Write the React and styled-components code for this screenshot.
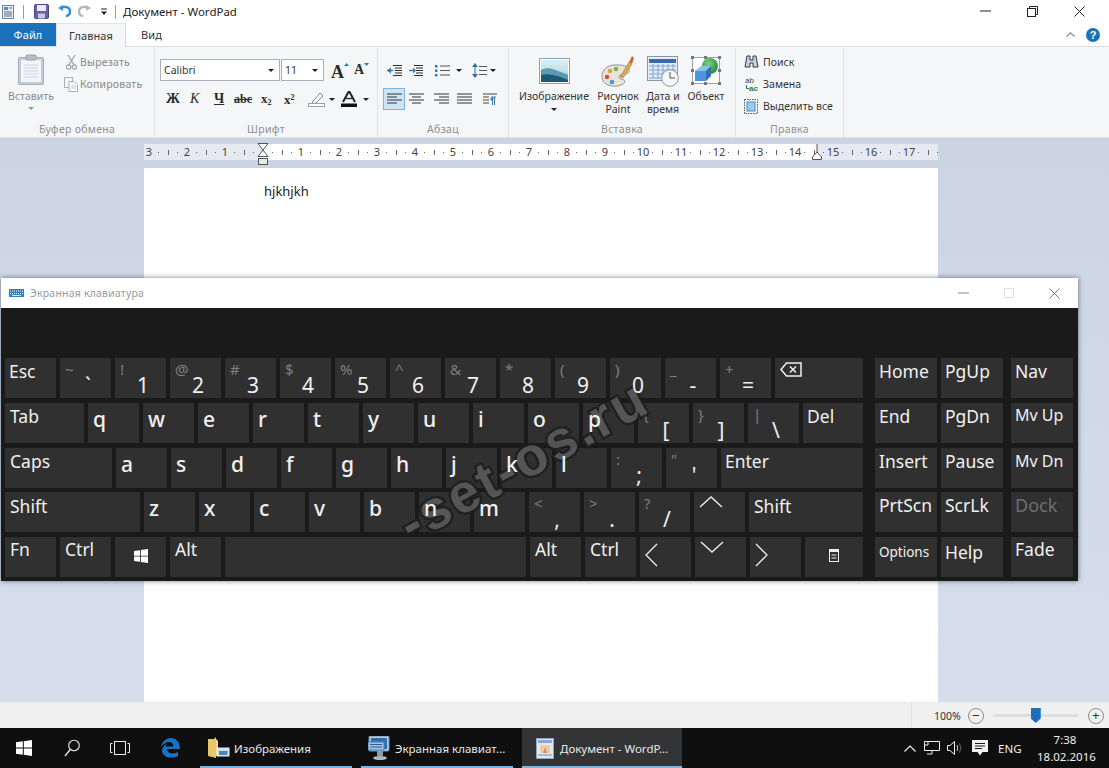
import React from "react";
import styled, { createGlobalStyle } from "styled-components";

const Global = createGlobalStyle`
  html, body { margin: 0; padding: 0; width: 1109px; height: 768px; overflow: hidden; background: #fff; }
  * { box-sizing: border-box; }
`;
const UI = `"Noto Sans", "Open Sans", "Liberation Sans", sans-serif`;

const Page = styled.div`
  position: relative; width: 1109px; height: 768px; overflow: hidden;
  display: flex; flex-direction: column; font-family: ${UI}; color: #222;
`;
/* title bar */
const TitleBar = styled.div`
  height: 23px; flex: none; display: flex; align-items: center; background: #fff; padding-left: 2px;
`;
const QuickCell = styled.div`
  flex: none; width: ${p => p.$w}px; display: flex; align-items: center;
`;
const QuickSep = styled.div`
  flex: none; width: 1px; height: 14px; background: #9a9a9a; margin: 0 ${p => p.$mr}px 0 ${p => p.$ml}px;
`;
const TitleText = styled.div`
  font-size: 11.5px; color: #222; flex: 1; white-space: nowrap;
`;
const WinControls = styled.div`display: flex; align-items: center; padding-right: 24px; gap: 36px;`;
const CtrlIcon = styled.svg`display: block; flex: none;`;

/* tabs */
const TabRow = styled.div`
  height: 24px; flex: none; display: flex; align-items: flex-end; background: #fff;
  border-bottom: 1px solid #dadbdc; position: relative;
`;
const Tab = styled.div`
  height: 23px; width: ${p => p.$w}px; flex: none; display: flex; align-items: center; justify-content: center;
  font-size: 11px; letter-spacing: .1px;
  color: ${p => (p.$file ? "#fff" : "#333")};
  background: ${p => (p.$file ? "#1b70bb" : p.$active ? "#f5f6f7" : "#fff")};
  ${p => p.$active && `border-left:1px solid #e3e4e5;border-right:1px solid #dadbdc;border-top:1px solid #e3e4e5;height:24px;margin-bottom:-1px;`}
`;
const TabRight = styled.div`
  margin-left: auto; align-self: center; display: flex; align-items: center; gap: 11px; padding-right: 9px;
`;
const HelpBadge = styled.div`
  width: 14px; height: 14px; border-radius: 50%; background: #1d71b8; color: #fff;
  font: bold 11px/14px "Liberation Sans", sans-serif; text-align: center;
`;

/* ribbon */
const Ribbon = styled.div`
  height: 91px; flex: none; display: flex; background: #f5f6f7; border-bottom: 1px solid #e0e2e5;
`;
const Group = styled.div`
  width: ${p => p.$w}px; flex: none; display: flex; flex-direction: column;
  border-right: 1px solid #e2e3e5;
  margin: 1px 0 0;
`;
const GroupBody = styled.div`flex: 1; min-height: 0; display: flex; padding: ${p => p.$pad || "0"};`;
const GroupColumn = styled(GroupBody)`flex-direction: column;`;
const GroupLabel = styled.div`
  height: 15px; flex: none; text-align: center; font-size: 10.5px; line-height: 14px; color: #8f8f8f; letter-spacing: .3px; padding-bottom: 1px;
`;
const PasteBtn = styled.div`
  width: 62px; flex: none; display: flex; flex-direction: column; align-items: center; padding-top: 6px;
  font-size: 10.5px; color: #8a8a8a; line-height: 14px;
`;
const PasteLabel = styled.div`margin-top: 4px;`;
const Caret = styled.div`
  width: 0; height: 0; flex: none; border-left: 3px solid transparent; border-right: 3px solid transparent;
  border-top: 3px solid ${p => p.$c || "#222"}; margin: ${p => p.$m || "0"};
`;
const ClipCol = styled.div`display: flex; flex-direction: column; padding-top: 6px; gap: 6px;`;
const ClipRow = styled.div`
  height: 16px; display: flex; align-items: center; font-size: 10.5px; color: #8a8a8a; white-space: nowrap; letter-spacing: .2px;
`;
const ClipIconBox = styled.div`width: 18px; flex: none; display: flex; justify-content: center;`;
const ToolRow = styled.div`
  height: ${p => p.$h || 22}px; flex: none; display: flex; align-items: center; margin-bottom: ${p => p.$mb || 0}px;
`;
const ComboBox = styled.div`
  width: ${p => p.$w}px; height: 22px; flex: none; border: 1px solid #abb0b8; background: #fff; display: flex;
  align-items: center; justify-content: space-between; padding: 0 5px 0 3px; font-size: 10.5px; color: #333;
  margin-left: ${p => p.$ml || 0}px;
`;
const Tool = styled.div`
  width: ${p => p.$w}px; flex: none; display: flex; align-items: center; height: 100%; margin-left: ${p => p.$ml || 0}px;
`;
const ActiveTool = styled.div`
  width: 22px; height: 22px; margin-right: 4px; flex: none; display: flex; align-items: center; justify-content: center;
  background: #cde4f7; border: 1px solid #7fb2dc;
`;
const FmtGlyph = styled.span`
  font-family: "Liberation Serif", serif; font-size: ${p => p.$s || 13}px; color: #2b2b2b; font-weight: ${p => (p.$n ? 400 : 700)};
  font-style: ${p => (p.$i ? "italic" : "normal")}; text-decoration: ${p => p.$d || "none"}; line-height: 1;
`;
const Sub = styled.span`font-size: 8px; vertical-align: ${p => (p.$up ? "4px" : "-2px")};`;
const SizeGlyph = styled.div`display: flex; align-items: flex-start; height: 14px;`;
const InsertBtn = styled.div`
  width: ${p => p.$w}px; flex: none; display: flex; flex-direction: column; align-items: center;
  font-size: 10.5px; line-height: 13px; color: #333; text-align: center; white-space: nowrap;
  padding-top: ${p => p.$pt}px;
`;
const InsertLabel = styled.div`margin-top: ${p => p.$mt}px;`;
const EditRow = styled.div`
  height: 22px; display: flex; align-items: center; font-size: 10.5px; color: #333; white-space: nowrap;
`;
const EditIcon = styled.div`width: 19px; flex: none; display: flex;`;

/* workspace */
const Workspace = styled.div`
  flex: 1; min-height: 0; display: flex; flex-direction: column; padding: 6px 0 0 144px;
  background: linear-gradient(#cbd4e3, #d6deec);
`;
const Ruler = styled.div`
  position: relative; width: 794px; height: 16px; flex: none; display: flex; align-items: center;
  background: linear-gradient(90deg, #e6e9ef 119px, #fff 119px, #fff 673px, #e6e9ef 673px);
`;
const RulerCell = styled.div`width: 38px; flex: none; display: flex; align-items: center;`;
const RulerNum = styled.div`
  width: 10px; flex: none; text-align: center; font-size: 11px; line-height: 14px; color: #444; white-space: nowrap;
  display: flex; justify-content: center;
`;
const RulerTicks = styled.div`flex: 1; display: flex; justify-content: space-between; align-items: center; padding: 0 4px;`;
const Tick = styled.i`
  display: block; width: 1px; height: ${p => (p.$long ? 5 : 1)}px; background: #666;
`;
const RulerMarkerBox = styled.div`position: absolute; left: ${p => p.$x}px; top: ${p => p.$y}px;`;
const Paper = styled.div`
  width: 794px; flex: 1; margin-top: 8px; background: #fff; padding: 15px 0 0 120px;
  font-size: 13px; line-height: 16px; color: #222;
`;

/* status bar */
const StatusBar = styled.div`
  height: 26px; flex: none; background: #f0f0f0; display: flex; align-items: center; padding-left: 911px;
  border-top: 1px solid #e8e8e8;
`;
const StatusCell = styled.div`
  flex: 1; height: 100%; border-left: 1px solid #e0e0e0; display: flex; align-items: center; padding-left: 22px; font-size: 10.5px; color: #333;
`;
const Zoom = styled.div`
  width: 16px; height: 16px; flex: none; border: 1px solid #8a8a8a; border-radius: 50%; display: flex; align-items: center;
  justify-content: center; font: 13px/13px "Liberation Sans", sans-serif; color: #333; margin: ${p => p.$m};
`;
const SliderTrack = styled.div`
  width: 85px; height: 3px; flex: none; background: #dfdfdf; display: flex; align-items: center; padding-left: 38px;
`;
const SliderThumb = styled.div`
  width: 10px; height: 15px; flex: none; background: #1b70bb; clip-path: polygon(0 0, 100% 0, 100% 70%, 50% 100%, 0 70%);
`;

/* taskbar */
const Taskbar = styled.div`
  height: 40px; flex: none; background: #0f0f10; display: flex; align-items: stretch; color: #eee; font-size: 11.5px;
`;
const TaskGlyph = styled.div`
  width: ${p => p.$w || 48}px; flex: none; display: flex; align-items: center; justify-content: center;
`;
const TaskItem = styled.div`
  width: ${p => p.$w}px; flex: none; display: flex; align-items: center; margin-left: ${p => p.$ml || 0}px;
  padding-left: ${p => p.$pl}px; gap: ${p => p.$gap}px; white-space: nowrap; font-size: 11.5px; color: #e8e8e8;
  border-bottom: 2px solid #78b5e4; padding-top: 2px;
  background: ${p => (p.$active ? "#333436" : "transparent")};
`;
const Tray = styled.div`flex: 1; display: flex; align-items: center; padding-left: 222px;`;
const TrayCell = styled.div`width: ${p => p.$w}px; flex: none; display: flex; align-items: center;`;
const Lang = styled.div`width: 39px; flex: none; font-size: 11.5px; color: #eee;`;
const Clock = styled.div`
  width: 56px; flex: none; text-align: center; font-size: 11.5px; line-height: 17px; color: #eee;
`;

/* keyboard */
const OskWindow = styled.div`
  position: absolute; left: 1px; top: 278px; width: 1077px; height: 303px; background: #1a1a1b;
  box-shadow: 0 0 5px rgba(40,50,70,.65); display: flex; flex-direction: column;
`;
const OskTitle = styled.div`
  height: 30px; flex: none; background: #fff; display: flex; align-items: center; padding-left: 8px;
  font-size: 10.5px; color: #9a9a9a; gap: 6px;
`;
const OskTitleText = styled.div`flex: 1; letter-spacing: .2px;`;
const OskControls = styled.div`display: flex; align-items: center; gap: 35px; padding-right: 18px;`;
const OskBody = styled.div`
  flex: 1; display: flex; padding: 50px 4px 0; gap: 12px;
`;
const KeyColumn = styled.div`
  width: ${p => p.$w}px; flex: none; display: flex; flex-direction: column; gap: 4.75px;
`;
const KeyRow = styled.div`display: flex; gap: 4px; height: 40px; flex: none;`;
const Key = styled.div`
  width: ${p => p.$w}px; flex: none; height: 100%; background: #303031; overflow: hidden;
  margin-left: ${p => p.$ml || 0}px;
  display: flex; flex-direction: column; color: ${p => (p.$dim ? "#6f6f6f" : "#f0f0f0")};
`;
const KeyText = styled.div`
  font-size: ${p => p.$s || 17.5}px; line-height: 24px; padding: ${p => p.$p || "1px 0 0 4px"}; white-space: nowrap;
  font-weight: 400;
`;
const KeyLetter = styled.div`
  position: relative; z-index: 2;
  font-size: 21px; line-height: 26px; padding: 3px 0 0 5px; white-space: nowrap; font-weight: 500;
`;
const ShiftLabel = styled.div`
  font-size: 15px; line-height: 16px; height: 14px; padding: 3px 0 0 5px; color: #7f7f7f; white-space: nowrap;
`;
const MainLabel = styled.div`
  position: relative; z-index: 2;
  font-size: 21px; line-height: 25px; width: 20px; margin-left: 18px; text-align: center; color: #f0f0f0; margin-top: 1px;
`;
const KeyIconBox = styled.div`
  display: flex; justify-content: ${p => p.$j || "flex-start"}; padding: ${p => p.$p};
`;
const Watermark = styled.div`
  position: absolute; z-index: 1; left: 522px; top: 182px; transform: translate(-50%, -50%) rotate(-29deg);
  font: bold 54px/56px "Liberation Sans", sans-serif; letter-spacing: 3px; color: #5c5c5c; white-space: nowrap;
  -webkit-text-stroke: 5px #1f1f1f; paint-order: stroke fill; opacity: .86; pointer-events: none;
`;

/* icons */
const Svg = ({ w, h, children, vb }) => (
  <CtrlIcon width={w} height={h} viewBox={vb || `0 0 ${w} ${h}`} fill="none">{children}</CtrlIcon>
);
const Lines = ({ rows, stroke = "#333", sw = 1 }) =>
  rows.map(([x1, y, x2], i) => <line key={i} x1={x1} y1={y} x2={x2} y2={y} stroke={stroke} strokeWidth={sw} />);

const AppIcon = () => (
  <Svg w={13} h={14}>
    <rect x=".5" y=".5" width="11" height="13" fill="#e8eef6" stroke="#6d84a4" />
    <rect x="2" y="2" width="4" height="3" fill="#5f86b8" />
    <Lines rows={[[7, 3, 10], [2, 7, 10], [2, 9, 10], [2, 11, 10]]} stroke="#667" />
  </Svg>
);
const SaveIcon = () => (
  <Svg w={15} h={15}>
    <rect x=".5" y=".5" width="14" height="14" rx="1" fill="#6d5fa6" stroke="#4f4386" />
    <rect x="3" y="1" width="9" height="6" fill="#eceaf5" />
    <rect x="4" y="9.5" width="7" height="5" fill="#c9c4e0" />
  </Svg>
);
const UndoIcon = ({ c = "#2f8fd6" }) => (
  <Svg w={14} h={14}>
    <path d="M5 2 H8 a4.5 4.5 0 0 1 1 9 " stroke={c} strokeWidth="2.6" fill="none" />
    <path d="M6 0 V6 L1 3Z" fill={c} />
  </Svg>
);
const RedoIcon = () => (
  <Svg w={14} h={14}>
    <path d="M9 2 H6 a4.5 4.5 0 0 0 -1 9" stroke="#b4b8bd" strokeWidth="2.6" fill="none" />
    <path d="M8 0 V6 L13 3Z" fill="#b4b8bd" />
  </Svg>
);
const QatMore = () => (
  <Svg w={8} h={8}>
    <line x1="1" y1="1" x2="7" y2="1" stroke="#222" />
    <path d="M1 3.5 H7 L4 7Z" fill="#222" />
  </Svg>
);
const MinIcon = ({ c = "#222" }) => <Svg w={11} h={3}><line x1="0" y1="1" x2="11" y2="1" stroke={c} /></Svg>;
const RestoreIcon = () => (
  <Svg w={11} h={11}>
    <rect x=".5" y="2.5" width="8" height="8" stroke="#222" />
    <path d="M2.5 2.5 V.5 H10.5 V8.5 H8.5" stroke="#222" />
  </Svg>
);
const CloseIcon = ({ c = "#222", s = 11 }) => (
  <Svg w={s} h={s}><path d={`M.5 .5 L${s - .5} ${s - .5} M${s - .5} .5 L.5 ${s - .5}`} stroke={c} /></Svg>
);
const CaretUp = () => <Svg w={9} h={5}><path d="M.5 4.5 L4.5 .8 L8.5 4.5" stroke="#8c8c8c" strokeWidth="1.2" /></Svg>;

const PasteIcon = () => (
  <Svg w={26} h={31}>
    <rect x=".5" y="3.5" width="25" height="27" rx="1.5" fill="#c5ccd6" stroke="#a5adb9" />
    <rect x="3" y="6" width="20" height="22" fill="#f2f4f7" />
    <rect x="8" y="1" width="10" height="5" rx="1" fill="#b6bdc8" stroke="#9aa2ae" />
    <Lines rows={[[6, 11, 20], [6, 14, 20], [6, 17, 20], [6, 20, 20], [6, 23, 20]]} stroke="#d0d6de" />
  </Svg>
);
const CutIcon = () => (
  <Svg w={11} h={15}>
    <path d="M2 0 L8 10 M9 0 L3 10" stroke="#a3a9b2" strokeWidth="1.4" />
    <circle cx="2.6" cy="12" r="2.2" stroke="#9aa2ae" strokeWidth="1.2" />
    <circle cx="8.4" cy="12" r="2.2" stroke="#9aa2ae" strokeWidth="1.2" />
  </Svg>
);
const CopyIcon = () => (
  <Svg w={14} h={15}>
    <rect x=".5" y=".5" width="8" height="10" fill="#f4f5f7" stroke="#aab1bb" />
    <path d="M5 4.5 H10 L13.5 8 V14.5 H5Z" fill="#fbfbfc" stroke="#aab1bb" />
    <Lines rows={[[7, 9, 12], [7, 11, 12]]} stroke="#c2c7ce" />
  </Svg>
);
const SizeMark = ({ dir }) => (
  <Svg w={5} h={3}><path d={dir === "up" ? "M0 3 L2.5 0 L5 3Z" : "M0 0 H5 L2.5 3Z"} fill="#2c7fb8" /></Svg>
);
const PenIcon = () => (
  <Svg w={17} h={16}>
    <path d="M5 10 L12 2 L15 5 L8 12 L4 13Z" fill="#f7f7f8" stroke="#808890" />
    <rect x=".5" y="12.5" width="16" height="3" fill="#fff" stroke="#9aa0a8" />
  </Svg>
);
const FontColor = () => (
  <Svg w={16} h={16}>
    <path d="M2 11 L8 0 L14 11" stroke="#222" strokeWidth="2" />
    <line x1="5" y1="7.5" x2="11" y2="7.5" stroke="#222" strokeWidth="1.3" />
    <rect x="0" y="12.5" width="16" height="3.5" fill="#111" />
  </Svg>
);
const IndentIcon = ({ flip }) => (
  <Svg w={16} h={13}>
    <Lines rows={[[6, 1.5, 15], [8, 4, 15], [8, 6.5, 15], [8, 9, 15], [6, 11.5, 15]]} stroke="#2f2f2f" />
    <line x1={flip ? 5 : 0} y1="6.5" x2={flip ? 1 : 6} y2="6.5" stroke="#2a7fc4" strokeWidth="1.4" />
    <path d={flip ? "M5 3.5 V9.5 L8 6.5Z" : "M4 3.5 V9.5 L0 6.5Z"} fill="#2a7fc4" />
  </Svg>
);
const ListIcon = () => (
  <Svg w={15} h={13}>
    {[2, 6.5, 11].map(y => <rect key={y} x="0" y={y - 1} width="2.4" height="2.4" fill="#2a6fb0" />)}
    <Lines rows={[[5, 2, 15], [5, 6.5, 15], [5, 11, 15]]} stroke="#555" />
  </Svg>
);
const SpacingIcon = () => (
  <Svg w={15} h={15}>
    <path d="M3 0 L6 4 H0Z M3 15 L6 11 H0Z" fill="#2a6fb0" />
    <line x1="3" y1="3" x2="3" y2="12" stroke="#2a6fb0" />
    <Lines rows={[[7, 3.5, 15], [7, 7.5, 15], [7, 11.5, 15]]} stroke="#555" />
  </Svg>
);
const AlignIcon = ({ rows }) => (
  <Svg w={15} h={12}><Lines rows={rows} stroke="#333" /></Svg>
);
const ParaIcon = () => (
  <Svg w={14} h={13}>
    <Lines rows={[[0, 1, 14], [0, 4, 6], [0, 7, 6], [0, 10, 6]]} stroke="#444" />
    <path d="M8 4 H13 M9.5 4 V12 M11.5 4 V12" stroke="#3b7eb5" />
    <circle cx="9" cy="6" r="1.6" fill="#3b7eb5" />
  </Svg>
);
const ImageIcon = () => (
  <Svg w={31} h={26}>
    <rect x=".5" y=".5" width="30" height="25" fill="#fff" stroke="#8aa2b5" />
    <defs>
      <linearGradient id="sk" x1="0" y1="0" x2="0" y2="1"><stop offset="0" stopColor="#d8eef3" /><stop offset=".55" stopColor="#bfe0e6" /><stop offset="1" stopColor="#3b7f9e" /></linearGradient>
    </defs>
    <rect x="2" y="2" width="27" height="22" fill="url(#sk)" />
    <path d="M2 12 C10 8 16 12 29 17 V24 H2Z" fill="#5a9ab0" />
    <path d="M2 17 C10 15 20 18 29 22 V24 H2Z" fill="#1c5877" />
  </Svg>
);
const PaletteIcon = () => (
  <Svg w={34} h={33}>
    <path d="M16 9 C6 8 0 15 1 22 C2 29 12 32 20 29 C26 27 24 23 20 23 C16 22 18 18 23 18 C29 18 30 14 26 11 C23 9 20 9 16 9Z" fill="#e8e4d8" stroke="#8d949c" />
    <circle cx="9" cy="15" r="2.3" fill="#d9a23a" />
    <circle cx="6" cy="21" r="2.3" fill="#cf4f45" />
    <circle cx="11" cy="26" r="2.3" fill="#4d97d6" />
    <circle cx="15" cy="13" r="2.3" fill="#80b14a" />
    <path d="M19 21 L28 6 L31 8 L22 22Z" fill="#dba75c" stroke="#a97a35" strokeWidth=".6" />
    <path d="M28 6 L31 0 L33 2 L31 8Z" fill="#c96a35" />
  </Svg>
);
const CalendarIcon = () => (
  <Svg w={32} h={31}>
    <rect x=".5" y=".5" width="30" height="24" fill="#e4ecf6" stroke="#8b98a8" />
    <rect x="2" y="3" width="27" height="4" fill="#3b68a8" />
    {[10, 14, 18, 22].map(y => <line key={y} x1="2" y1={y} x2="29" y2={y} stroke="#7fa5d3" />)}
    {[6, 11, 16, 21, 26].map(x => <line key={x} x1={x} y1="8" x2={x} y2="23" stroke="#7fa5d3" />)}
    <circle cx="23" cy="22" r="8.3" fill="#f5f6f7" stroke="#8d949c" />
    <path d="M23 16 V22 H28" stroke="#555" />
  </Svg>
);
const ObjectIcon = () => (
  <Svg w={30} h={29}>
    <rect x="1.5" y="1.5" width="27" height="26" fill="#fff" stroke="#9aa2ad" />
    {[[0, 0], [13, 0], [27, 0], [0, 13], [27, 13], [0, 26], [13, 26], [27, 26]].map(([x, y]) => (
      <rect key={`${x}${y}`} x={x} y={y} width="3" height="3" fill="#777" />
    ))}
    <defs>
      <radialGradient id="gb" cx=".4" cy=".35" r=".7"><stop offset="0" stopColor="#7fd07a" /><stop offset="1" stopColor="#1f8a3a" /></radialGradient>
    </defs>
    <circle cx="19" cy="10" r="8" fill="url(#gb)" />
    <path d="M4 15 L10 10 H20 L15 15Z" fill="#8cc0f0" />
    <path d="M15 15 L20 10 V20 L15 25Z" fill="#2f6fb8" />
    <rect x="4" y="15" width="11" height="10" fill="#4a94e0" />
  </Svg>
);
const BinocIcon = () => (
  <Svg w={15} h={14}>
    <path d="M3 1 H6 V5 H9 V1 H12 L14 12 H9 V8 H6 V12 H1Z" fill="#c9d0d8" stroke="#2e3b4c" />
  </Svg>
);
const ReplaceIcon = () => (
  <Svg w={16} h={16} vb="0 0 16 16">
    <text x="1" y="6.5" fontFamily="Liberation Sans" fontSize="8" fill="#444">ab</text>
    <text x="5" y="15" fontFamily="Liberation Sans" fontSize="8" fontWeight="700" fill="#22814d">ac</text>
    <path d="M2.5 9 V12.5 H5" stroke="#22814d" />
  </Svg>
);
const SelectAllIcon = () => (
  <Svg w={14} h={15}>
    <rect x=".5" y=".5" width="13" height="14" stroke="#555" strokeDasharray="1.5 1" />
    <rect x="3" y="3" width="8" height="9" fill="#9bcbea" stroke="#3e8fc4" />
  </Svg>
);
const MarginTop = () => (
  <Svg w={12} h={24}>
    <path d="M1 .5 H11 L6 7 L11 13.5 H1 L6 7Z" fill="#fff" stroke="#555" />
    <rect x="1.5" y="15.5" width="9" height="6" fill="#e8e8e8" stroke="#555" />
  </Svg>
);
const MarginRight = () => (
  <Svg w={10} h={16}>
    <line x1="5" y1="0" x2="5" y2="8" stroke="#555" />
    <path d="M.5 15.5 V13 L5 8 L9.5 13 V15.5Z" fill="#fff" stroke="#555" />
  </Svg>
);
const OskIcon = () => (
  <Svg w={15} h={8}>
    <rect width="15" height="8" fill="#2f80bd" />
    {[1.5, 4].map(y => [1, 3, 5, 7, 9, 11, 13].map(x => <rect key={`${x}${y}`} x={x} y={y} width="1" height="1.2" fill="#cfe7f7" />))}
    <rect x="3" y="6" width="9" height="1" fill="#cfe7f7" />
  </Svg>
);
const WinLogo = ({ s = 16, c = "#fff" }) => (
  <Svg w={s} h={s} vb="0 0 16 16">
    <path d="M0 2.3 L6.8 1.3 V7.6 H0Z M7.8 1.2 L16 0 V7.6 H7.8Z M0 8.5 H6.8 V14.7 L0 13.7Z M7.8 8.5 H16 V16 L7.8 14.8Z" fill={c} />
  </Svg>
);
const SearchIcon = () => (
  <Svg w={16} h={18}>
    <circle cx="10" cy="6.5" r="5.3" stroke="#e8e8e8" strokeWidth="1.1" />
    <line x1="6.2" y1="10.5" x2="1" y2="17" stroke="#e8e8e8" strokeWidth="1.3" />
  </Svg>
);
const TaskView = () => (
  <Svg w={20} h={14}>
    <rect x="4.5" y=".5" width="11" height="13" stroke="#eee" />
    <path d="M2.5 2.5 H.5 V11.5 H2.5 M17.5 2.5 H19.5 V11.5 H17.5" stroke="#eee" />
  </Svg>
);
const EdgeIcon = () => (
  <Svg w={20} h={20}>
    <path d="M1 9 C2 3 7 0 11 0 C16 0 20 4 20 11 H7 C7 15 12 17 18 14 V18 C12 21 3 20 2 13 C2 10 4 7 7 6 C6 7 5.5 8 5.5 8.5 H13.5 C13.5 3 6 2 1 9Z" fill="#1574c4" />
  </Svg>
);
const FolderIcon = () => (
  <Svg w={22} h={22}>
    <path d="M0 2 H6 L8 0 V21 L0 19Z" fill="#e7c768" />
    <path d="M8 2 L10 4 V19 H8Z" fill="#f4dd92" />
    <rect x="9.5" y="11" width="11.5" height="8" fill="#cfe0ee" stroke="#e6eef5" />
    <rect x="11" y="14" width="8.5" height="4" fill="#4b87b3" />
  </Svg>
);
const KbdTaskIcon = () => (
  <Svg w={23} h={25}>
    <rect x="1" y="0" width="20" height="15" rx="1" fill="#b3cfe8" stroke="#6f8cab" />
    <rect x="3" y="2" width="16" height="11" fill="#2f6fb0" />
    <path d="M0 6 H16 V14 H0Z" fill="#a3c3e2" stroke="#4e7fb0" />
    <Lines rows={[[2, 8.5, 14], [2, 11, 14]]} stroke="#2c5f90" />
    <rect x="9" y="15" width="6" height="5" fill="#8d9aa8" />
    <ellipse cx="12" cy="22" rx="7" ry="2" fill="#aeb7c0" />
  </Svg>
);
const DocIcon = () => (
  <Svg w={18} h={21}>
    <rect x=".5" y=".5" width="17" height="20" fill="#dfe9f5" stroke="#8ea6c4" />
    <rect x="2" y="2" width="14" height="3" fill="#82a9d4" />
    <rect x="4" y="7" width="10" height="8" fill="#f2c9a4" />
    <path d="M7 15 L9 9 L11 15Z" fill="#d58c5a" />
    <Lines rows={[[2, 17, 16]]} stroke="#6e8cb0" />
  </Svg>
);
const TrayChevron = () => <Svg w={12} h={7}><path d="M.5 6.5 L6 1 L11.5 6.5" stroke="#eee" strokeWidth="1.2" /></Svg>;
const NetworkIcon = () => (
  <Svg w={16} h={15}>
    <path d="M.5 .5 H15.5 V9.5 H.5Z M4 .5 V4 H.5" stroke="#eee" />
    <path d="M8 9.5 V13 H3" stroke="#eee" />
  </Svg>
);
const VolumeIcon = () => (
  <Svg w={16} h={14}>
    <path d="M.5 4.5 H3 L7.5 .5 V13.5 L3 9.5 H.5Z" stroke="#eee" />
    <path d="M10 4 Q11.5 7 10 10" stroke="#ccc" />
    <path d="M12.5 2.5 Q15 7 12.5 11.5" stroke="#666" />
  </Svg>
);
const NotifyIcon = () => (
  <Svg w={16} h={16}>
    <path d="M0 0 H16 V12 H10.5 L8 15.5 L5.5 12 H0Z" fill="#f2f2f2" />
    <Lines rows={[[3, 3.5, 13], [3, 6, 13], [3, 8.5, 10]]} stroke="#1a1a1a" />
  </Svg>
);
const BackspaceIcon = () => (
  <Svg w={22} h={15}>
    <path d="M6.5 1 H21 V14 H6.5 L1 7.5Z" stroke="#f0f0f0" strokeWidth="1.5" />
    <path d="M10 4.5 L16 10.5 M16 4.5 L10 10.5" stroke="#f0f0f0" strokeWidth="1.5" />
  </Svg>
);
const Chevron = ({ d }) => {
  const paths = {
    up: ["M1 11 L12 1 L23 11", 24, 12],
    down: ["M1 1 L12 11 L23 1", 24, 12],
    left: ["M12 1 L1 12 L12 23", 13, 24],
    right: ["M1 1 L12 12 L1 23", 13, 24],
  };
  const [p, w, h] = paths[d];
  return <Svg w={w} h={h}><path d={p} stroke="#f0f0f0" strokeWidth="1.3" /></Svg>;
};
const MenuKeyIcon = () => (
  <Svg w={10} h={13}>
    <rect x=".5" y="2.5" width="9" height="10" stroke="#eee" />
    <rect x="0" y="0" width="10" height="2.5" fill="#eee" />
    <Lines rows={[[2.5, 6, 7.5], [2.5, 9, 7.5]]} stroke="#eee" />
  </Svg>
);

/* data */
const T = (w, label, s, p, dim) => ({ w, label, s, p, dim, kind: "text" });
const L = label => ({ w: 51, label, kind: "letter" });
const N = (shift, main) => ({ w: 51, shift, main, kind: "num" });
const I = (w, icon, j, p) => ({ w, icon, j, p, kind: "icon" });

const mainRows = [
  [T(51, "Esc"), N("~", "`"), N("!", "1"), N("@", "2"), N("#", "3"), N("$", "4"), N("%", "5"), N("^", "6"), N("&", "7"), N("*", "8"), N("(", "9"), N(")", "0"), N("_", "-"), N("+", "="), I(88, <BackspaceIcon />, "flex-start", "4px 0 0 5px")],
  [T(79, "Tab", undefined, "1px 0 0 5px"), L("q"), L("w"), L("e"), L("r"), L("t"), L("y"), L("u"), L("i"), L("o"), L("p"), N("{", "["), N("}", "]"), N("|", "\\"), T(60, "Del")],
  [T(107, "Caps", undefined, "1px 0 0 5px"), L("a"), L("s"), L("d"), L("f"), L("g"), L("h"), L("j"), L("k"), L("l"), N(":", ";"), N('"', "'"), T(142, "Enter")],
  [T(135, "Shift", undefined, "2px 0 0 5px"), L("z"), L("x"), L("c"), L("v"), L("b"), L("n"), L("m"), N("<", ","), N(">", "."), N("?", "/"), I(51, <Chevron d="up" />, "flex-start", "4px 0 0 5px"), T(114, "Shift", undefined, "2px 0 0 5px")],
  [T(51, "Fn", undefined, "0 0 0 5px"), T(51, "Ctrl", undefined, "0 0 0 5px"), I(51, <WinLogo s={14} />, "center", "12px 0 0 0"), T(51, "Alt", undefined, "0 0 0 5px"), { w: 301, kind: "blank" }, T(51, "Alt", undefined, "0 0 0 5px"), T(51, "Ctrl", undefined, "0 0 0 5px"), I(51, <Chevron d="left" />, "flex-start", "6px 0 0 5px"), I(51, <Chevron d="down" />, "flex-start", "4px 0 0 5px"), I(51, <Chevron d="right" />, "flex-start", "6px 0 0 5px"), I(58, <MenuKeyIcon />, "center", "12px 0 0 0")],
];
const navRows = [
  ["Home", "PgUp", "Nav"],
  ["End", "PgDn", ["Mv Up", 16, false, "0 0 0 4px"]],
  ["Insert", "Pause", ["Mv Dn", 16, false, "1px 0 0 4px"]],
  ["PrtScn", "ScrLk", ["Dock", 18, true]],
  [["Options", 13.5, false, "3px 0 0 4px"], ["Help", 17.5, false, "3px 0 0 4px"], ["Fade", 17.5, false, "0 0 0 4px"]],
];

const renderKey = k => {
  if (k.kind === "text") return <KeyText $s={k.s} $p={k.p}>{k.label}</KeyText>;
  if (k.kind === "letter") return <KeyLetter>{k.label}</KeyLetter>;
  if (k.kind === "num") return <><ShiftLabel>{k.shift}</ShiftLabel><MainLabel>{k.main}</MainLabel></>;
  if (k.kind === "icon") return <KeyIconBox $j={k.j} $p={k.p}>{k.icon}</KeyIconBox>;
  return null;
};

const rulerNums = [3, 2, 1, "", 1, 2, 3, 4, 5, 6, 7, 8, 9, 10, 11, 12, 13, 14, 15, 16, 17];

const alignLeft = [[0, 1, 15], [0, 4, 10], [0, 7, 15], [0, 10, 10]];
const alignCenter = [[0, 1, 15], [3, 4, 12], [0, 7, 15], [3, 10, 12]];
const alignRight = [[0, 1, 15], [5, 4, 15], [0, 7, 15], [5, 10, 15]];
const alignJust = [[0, 1, 15], [0, 4, 15], [0, 7, 15], [0, 10, 15]];

export default function App() {
  return (
    <Page>
      <Global />
      <TitleBar>
        <QuickCell $w={21}><AppIcon /></QuickCell>
        <QuickSep $ml={0} $mr={10} />
        <QuickCell $w={23}><SaveIcon /></QuickCell>
        <QuickCell $w={21}><UndoIcon /></QuickCell>
        <QuickCell $w={22}><RedoIcon /></QuickCell>
        <QuickCell $w={15}><QatMore /></QuickCell>
        <QuickSep $ml={0} $mr={7} />
        <TitleText>Документ - WordPad</TitleText>
        <WinControls>
          <MinIcon />
          <RestoreIcon />
          <CloseIcon />
        </WinControls>
      </TitleBar>

      <TabRow>
        <Tab $file $w={56}>Файл</Tab>
        <Tab $active $w={70}>Главная</Tab>
        <Tab $w={51}>Вид</Tab>
        <TabRight><CaretUp /><HelpBadge>?</HelpBadge></TabRight>
      </TabRow>

      <Ribbon>
        <Group $w={155}>
          <GroupBody>
            <PasteBtn>
              <PasteIcon />
              <PasteLabel>Вставить</PasteLabel>
              <Caret $c="#9a9a9a" $m="4px 0 0" />
            </PasteBtn>
            <ClipCol>
              <ClipRow><ClipIconBox><CutIcon /></ClipIconBox>Вырезать</ClipRow>
              <ClipRow><ClipIconBox><CopyIcon /></ClipIconBox>Копировать</ClipRow>
            </ClipCol>
          </GroupBody>
          <GroupLabel>Буфер обмена</GroupLabel>
        </Group>

        <Group $w={223}>
          <GroupColumn $pad="11px 0 0 5px">
            <ToolRow $mb={7}>
              <ComboBox $w={120}>Calibri<Caret /></ComboBox>
              <ComboBox $w={43} $ml={1}>11<Caret /></ComboBox>
              <Tool $w={23} $ml={7}><SizeGlyph><FmtGlyph $s={18}>A</FmtGlyph><SizeMark dir="up" /></SizeGlyph></Tool>
              <Tool $w={16}><SizeGlyph><FmtGlyph $s={14}>A</FmtGlyph><SizeMark dir="down" /></SizeGlyph></Tool>
            </ToolRow>
            <ToolRow>
              <Tool $w={6} />
              <Tool $w={24}><FmtGlyph $s={14}>Ж</FmtGlyph></Tool>
              <Tool $w={24}><FmtGlyph $i $s={14} $n>К</FmtGlyph></Tool>
              <Tool $w={20}><FmtGlyph $d="underline" $s={14}>Ч</FmtGlyph></Tool>
              <Tool $w={27}><FmtGlyph $d="line-through" $s={12}>abc</FmtGlyph></Tool>
              <Tool $w={23}><FmtGlyph $s={13}>x<Sub>2</Sub></FmtGlyph></Tool>
              <Tool $w={24}><FmtGlyph $s={13}>x<Sub $up>2</Sub></FmtGlyph></Tool>
              <Tool $w={21}><PenIcon /></Tool>
              <Tool $w={12}><Caret /></Tool>
              <Tool $w={22}><FontColor /></Tool>
              <Tool $w={6}><Caret /></Tool>
            </ToolRow>
          </GroupColumn>
          <GroupLabel>Шрифт</GroupLabel>
        </Group>

        <Group $w={131}>
          <GroupColumn $pad="11px 0 0 5px">
            <ToolRow $mb={7}>
              <Tool $w={4} />
              <Tool $w={21}><IndentIcon /></Tool>
              <Tool $w={27}><IndentIcon flip /></Tool>
              <Tool $w={21}><ListIcon /></Tool>
              <Tool $w={16}><Caret /></Tool>
              <Tool $w={18}><SpacingIcon /></Tool>
              <Tool $w={6}><Caret /></Tool>
            </ToolRow>
            <ToolRow>
              <ActiveTool><AlignIcon rows={alignLeft} /></ActiveTool>
              <Tool $w={25}><AlignIcon rows={alignCenter} /></Tool>
              <Tool $w={23}><AlignIcon rows={alignRight} /></Tool>
              <Tool $w={26}><AlignIcon rows={alignJust} /></Tool>
              <Tool $w={14}><ParaIcon /></Tool>
            </ToolRow>
          </GroupColumn>
          <GroupLabel>Абзац</GroupLabel>
        </Group>

        <Group $w={227}>
          <GroupBody $pad="0 0 0 4px">
            <InsertBtn $w={82} $pt={10}>
              <ImageIcon />
              <InsertLabel $mt={6}>Изображение</InsertLabel>
              <Caret $m="5px 0 0" />
            </InsertBtn>
            <InsertBtn $w={46} $pt={8}>
              <PaletteIcon />
              <InsertLabel $mt={1}>Рисунок<br />Paint</InsertLabel>
            </InsertBtn>
            <InsertBtn $w={44} $pt={8}>
              <CalendarIcon />
              <InsertLabel $mt={3}>Дата и<br />время</InsertLabel>
            </InsertBtn>
            <InsertBtn $w={42} $pt={8}>
              <ObjectIcon />
              <InsertLabel $mt={5}>Объект</InsertLabel>
            </InsertBtn>
          </GroupBody>
          <GroupLabel>Вставка</GroupLabel>
        </Group>

        <Group $w={108}>
          <GroupColumn $pad="3px 0 0 8px">
            <EditRow><EditIcon><BinocIcon /></EditIcon>Поиск</EditRow>
            <EditRow><EditIcon><ReplaceIcon /></EditIcon>Замена</EditRow>
            <EditRow><EditIcon><SelectAllIcon /></EditIcon>Выделить все</EditRow>
          </GroupColumn>
          <GroupLabel>Правка</GroupLabel>
        </Group>
      </Ribbon>

      <Workspace>
        <Ruler>
          {rulerNums.map((n, i) => (
            <RulerCell key={i}>
              <RulerNum>{n}</RulerNum>
              <RulerTicks><Tick /><Tick $long /><Tick /></RulerTicks>
            </RulerCell>
          ))}
          <RulerMarkerBox $x={113} $y={-1}><MarginTop /></RulerMarkerBox>
          <RulerMarkerBox $x={668} $y={0}><MarginRight /></RulerMarkerBox>
        </Ruler>
        <Paper>hjkhjkh</Paper>
      </Workspace>

      <StatusBar>
        <StatusCell>
          100%
          <Zoom $m="0 9px 0 7px">−</Zoom>
          <SliderTrack><SliderThumb /></SliderTrack>
          <Zoom $m="0 0 0 10px">+</Zoom>
        </StatusCell>
      </StatusBar>

      <Taskbar>
        <TaskGlyph><WinLogo /></TaskGlyph>
        <TaskGlyph><SearchIcon /></TaskGlyph>
        <TaskGlyph><TaskView /></TaskGlyph>
        <TaskGlyph $w={52}><EdgeIcon /></TaskGlyph>
        <TaskItem $w={152} $ml={4} $pl={8} $gap={4}><FolderIcon />Изображения</TaskItem>
        <TaskItem $w={152} $ml={9} $pl={7} $gap={4}><KbdTaskIcon />Экранная клавиат...</TaskItem>
        <TaskItem $w={160} $ml={9} $pl={14} $gap={6} $active><DocIcon />Документ - WordP...</TaskItem>
        <Tray>
          <TrayCell $w={20}><TrayChevron /></TrayCell>
          <TrayCell $w={23}><NetworkIcon /></TrayCell>
          <TrayCell $w={25}><VolumeIcon /></TrayCell>
          <TrayCell $w={26}><NotifyIcon /></TrayCell>
          <Lang>ENG</Lang>
          <Clock>7:38<br />18.02.2016</Clock>
        </Tray>
      </Taskbar>

      <OskWindow>
        <OskTitle>
          <OskIcon />
          <OskTitleText>Экранная клавиатура</OskTitleText>
          <OskControls>
            <MinIcon c="#888" />
            <Svg w={10} h={10}><rect x=".5" y=".5" width="9" height="9" stroke="#e0e0e0" /></Svg>
            <CloseIcon c="#777" />
          </OskControls>
        </OskTitle>
        <OskBody>
          <KeyColumn $w={858}>
            {mainRows.map((row, r) => (
              <KeyRow key={r}>
                {row.map((k, i) => <Key key={i} $w={k.w}>{renderKey(k)}</Key>)}
              </KeyRow>
            ))}
          </KeyColumn>
          <KeyColumn $w={198}>
            {navRows.map((row, r) => (
              <KeyRow key={r}>
                {row.map((k, i) => {
                  const [label, size, dim, pad] = Array.isArray(k) ? k : [k];
                  return (
                    <Key key={i} $w={62} $ml={i === 2 ? 4 : 0} $dim={dim}>
                      <KeyText $s={size} $p={pad}>{label}</KeyText>
                    </Key>
                  );
                })}
              </KeyRow>
            ))}
          </KeyColumn>
        </OskBody>
        <Watermark>-set-os.ru</Watermark>
      </OskWindow>
    </Page>
  );
}
